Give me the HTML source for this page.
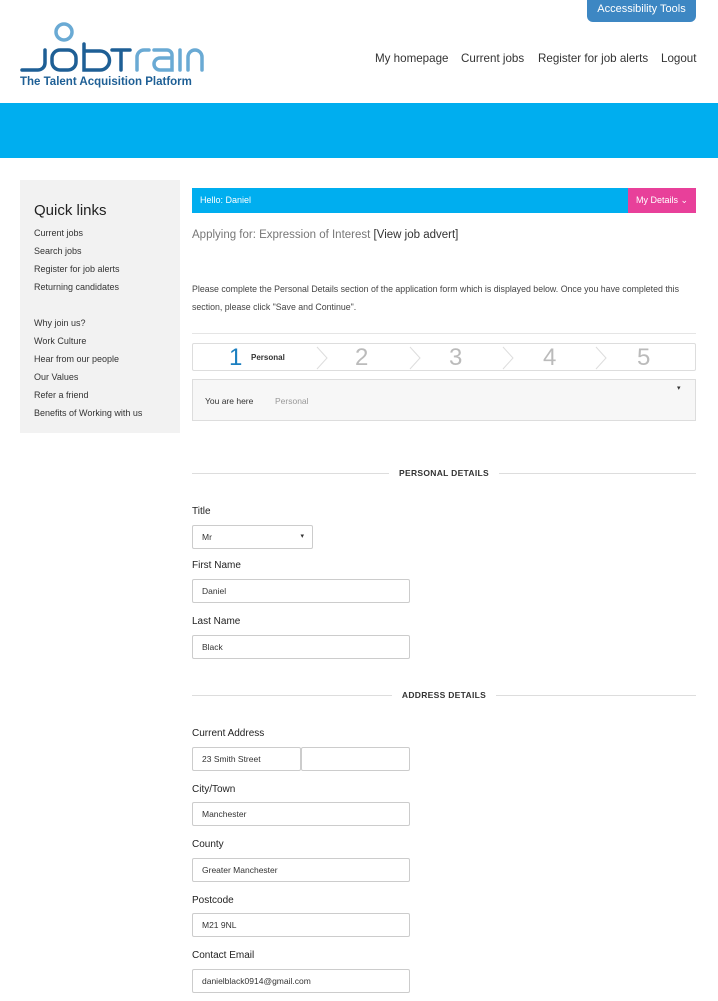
<!DOCTYPE html>
<html><head><meta charset="utf-8"><style>
*{box-sizing:border-box;margin:0;padding:0}
body{width:718px;height:1001px;overflow:hidden;background:#fff;font-family:"Liberation Sans",sans-serif;color:#333;position:relative}
.abs{position:absolute}
.acc{left:587px;top:0;width:109px;height:22px;background:#3d87c3;color:#fff;font-size:11px;text-align:center;line-height:18px;border-radius:0 0 6px 6px}
.nav{top:52px;font-size:11.6px;color:#333}
.band{left:0;top:103px;width:718px;height:55px;background:#00aeef}
.side{left:20px;top:180px;width:160px;height:253px;background:#f2f2f2}
.side h2{position:absolute;left:14px;top:22px;font-size:15px;font-weight:normal;color:#222}
.side a{position:absolute;left:14px;font-size:9px;color:#333}
.hello{left:192px;top:188px;width:504px;height:25px;background:#00aeef;color:#fff;font-size:9px;line-height:25px;padding-left:8px}
.md{right:0;top:0;width:68px;height:25px;background:#e8409a;text-align:center}
.lbl{left:192px;font-size:10px;color:#222}
.inp{left:192px;width:218px;height:24px;border:1px solid #ccc;border-radius:2px;font-size:8.5px;padding-left:9px;line-height:22px;color:#333}
.sec{left:192px;width:504px;height:12px}
.sec:before{content:"";position:absolute;left:0;right:0;top:6px;border-top:1px solid #ddd}
.sec span{position:relative;display:block;margin:0 auto;width:max-content;background:#fff;padding:0 10px;font-size:8.5px;font-weight:bold;color:#333;letter-spacing:.3px;line-height:12px}
.steps{left:192px;top:343px;width:504px;height:28px;border:1px solid #ddd;border-radius:2px}
.num{position:absolute;top:0;font-size:24px;color:#bbb;line-height:28px}
.chev{position:absolute;top:2px;width:24px;height:24px}
</style></head><body>
<div class="abs acc">Accessibility Tools</div>
<svg class="abs" style="left:18px;top:20px" width="190" height="56" viewBox="0 0 190 56">
<circle cx="46" cy="12" r="8" fill="none" stroke="#6aaad4" stroke-width="3.5"/>
<g fill="none" stroke-width="3.5" stroke-linecap="round">
<path d="M4 50 H20 a7 7 0 0 0 7 -7 V30" stroke="#1e5f95"/>
<rect x="34" y="30" width="24" height="20" rx="8" stroke="#1e5f95"/>
<path d="M66 24 V50 H82 a9 9 0 0 0 0 -19 H68" stroke="#1e5f95"/>
<path d="M94 30 H112 M103 30 V50" stroke="#1e5f95"/>
<path d="M119 50 V37 a7 7 0 0 1 7 -7 H131" stroke="#6aaad4"/>
<path d="M136 30 H149 a5 5 0 0 1 5 5 V50 H142 a6 6 0 0 1 0 -12 H153" stroke="#6aaad4"/>
<path d="M162 30 V50" stroke="#6aaad4"/>
<path d="M170 50 V37 a7 7 0 0 1 7 -7 H177 a7 7 0 0 1 7 7 V50" stroke="#6aaad4"/>
</g></svg>
<div class="abs" style="left:20px;top:76px;font-size:11.5px;font-weight:bold;color:#1e5f95">The Talent Acquisition Platform</div>
<div class="abs nav" style="left:375px">My homepage</div>
<div class="abs nav" style="left:461px">Current jobs</div>
<div class="abs nav" style="left:538px">Register for job alerts</div>
<div class="abs nav" style="left:661px">Logout</div>
<div class="abs band"></div>
<div class="abs side"><h2>Quick links</h2>
<a style="top:48px">Current jobs</a><a style="top:66px">Search jobs</a><a style="top:84px">Register for job alerts</a><a style="top:102px">Returning candidates</a>
<a style="top:138px">Why join us?</a><a style="top:156px">Work Culture</a><a style="top:174px">Hear from our people</a><a style="top:192px">Our Values</a><a style="top:210px">Refer a friend</a><a style="top:228px">Benefits of Working with us</a></div>
<div class="abs hello">Hello: Daniel<div class="abs md">My Details ⌄</div></div>
<div class="abs" style="left:192px;top:229px;font-size:11.5px;color:#777">Applying for: Expression of Interest <span style="color:#333">[View job advert]</span></div>
<div class="abs" style="left:192px;top:280px;width:504px;font-size:8.8px;line-height:18px;color:#444">Please complete the Personal Details section of the application form which is displayed below. Once you have completed this section, please click "Save and Continue".</div>
<div class="abs" style="left:192px;top:333px;width:504px;border-top:1px solid #e5e5e5"></div>
<div class="abs steps">
<div class="num" style="left:36px;color:#1b7fc0">1</div><div class="abs" style="left:58px;top:9px;font-size:8px;font-weight:bold;color:#333">Personal</div>
<svg class="chev" style="left:118px" viewBox="0 0 24 24"><path d="M6 1 L16 12 L6 23" fill="none" stroke="#ddd"/></svg>
<div class="num" style="left:162px">2</div>
<svg class="chev" style="left:211px" viewBox="0 0 24 24"><path d="M6 1 L16 12 L6 23" fill="none" stroke="#ddd"/></svg>
<div class="num" style="left:256px">3</div>
<svg class="chev" style="left:304px" viewBox="0 0 24 24"><path d="M6 1 L16 12 L6 23" fill="none" stroke="#ddd"/></svg>
<div class="num" style="left:350px">4</div>
<svg class="chev" style="left:397px" viewBox="0 0 24 24"><path d="M6 1 L16 12 L6 23" fill="none" stroke="#ddd"/></svg>
<div class="num" style="left:444px">5</div>
</div>
<div class="abs" style="left:192px;top:379px;width:504px;height:42px;background:#f7f7f7;border:1px solid #ddd">
<span class="abs" style="left:12px;top:16px;font-size:8.5px;color:#333">You are here</span>
<span class="abs" style="left:82px;top:16px;font-size:8.5px;color:#999">Personal</span>
<span class="abs" style="left:484px;top:4px;font-size:7px">▾</span></div>
<div class="abs sec" style="top:467px"><span>PERSONAL DETAILS</span></div>
<div class="abs lbl" style="top:506px">Title</div>
<div class="abs inp" style="top:525px;width:121px">Mr<span class="abs" style="right:8px;top:0;font-size:7px">▾</span></div>
<div class="abs lbl" style="top:560px">First Name</div>
<div class="abs inp" style="top:579px">Daniel</div>
<div class="abs lbl" style="top:616px">Last Name</div>
<div class="abs inp" style="top:635px">Black</div>
<div class="abs sec" style="top:689px"><span>ADDRESS DETAILS</span></div>
<div class="abs lbl" style="top:728px">Current Address</div>
<div class="abs inp" style="top:747px;width:109px">23 Smith Street</div>
<div class="abs inp" style="top:747px;left:301px;width:109px"></div>
<div class="abs lbl" style="top:784px">City/Town</div>
<div class="abs inp" style="top:802px">Manchester</div>
<div class="abs lbl" style="top:839px">County</div>
<div class="abs inp" style="top:858px">Greater Manchester</div>
<div class="abs lbl" style="top:895px">Postcode</div>
<div class="abs inp" style="top:913px">M21 9NL</div>
<div class="abs lbl" style="top:950px">Contact Email</div>
<div class="abs inp" style="top:969px">danielblack0914@gmail.com</div>
</body></html>
